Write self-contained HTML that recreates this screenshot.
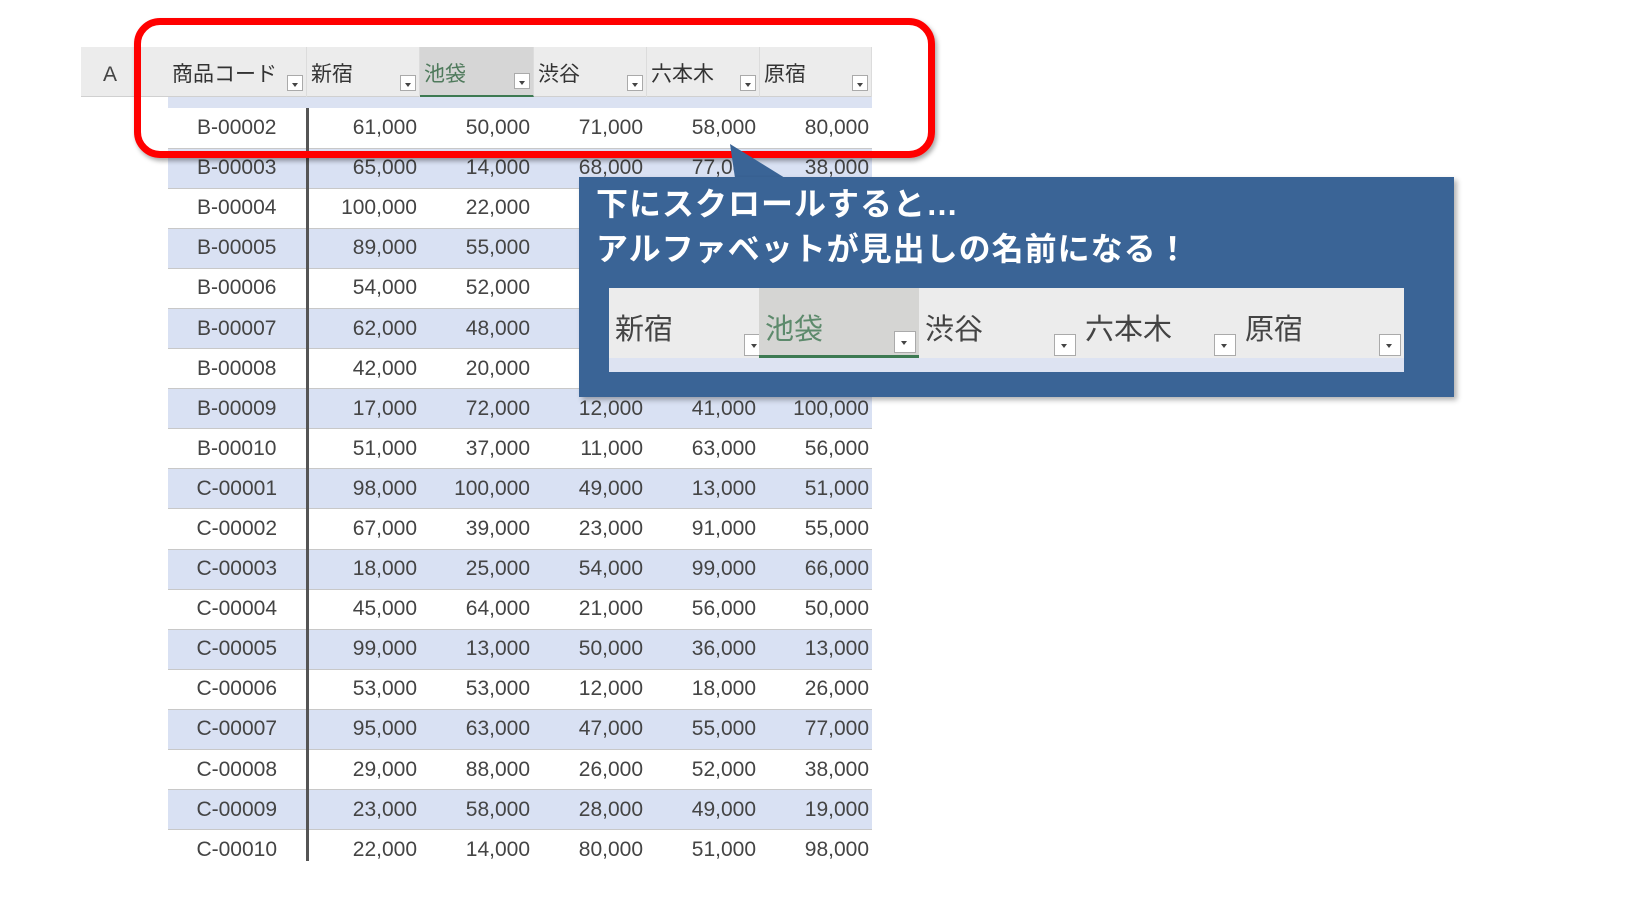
<!DOCTYPE html>
<html><head><meta charset="utf-8"><style>
*{margin:0;padding:0;box-sizing:border-box}
body{width:1638px;height:897px;background:#fff;position:relative;overflow:hidden;font-family:"Liberation Sans","Noto Sans CJK JP",sans-serif}
.hdr{position:absolute;left:81px;top:47px;width:791px;height:50px;background:#ececec;border-bottom:1px solid #d0d0d0}
.hc{position:absolute;top:0;height:50px;font-size:21px;color:#333;line-height:56px;padding-left:4px;border-right:1px solid #dcdcdc}
.dd{position:absolute;right:3px;bottom:6px;width:16px;height:16px;border:1px solid #aaa;background:#fff}
.dd:after{content:"";position:absolute;left:4px;top:7px;border-left:3px solid transparent;border-right:3px solid transparent;border-top:4px solid #444}
.strip{position:absolute;left:168px;top:97px;width:704px;height:11px;background:#dbe2f2}
table{position:absolute;left:168px;top:108px;border-collapse:collapse;font-size:21px;color:#444;table-layout:fixed}
td{height:40.1px;border-bottom:1px solid #c8c8c8;text-align:right;padding-right:3px;width:113px}
td.c{width:139px;text-align:center;padding:0;border-right:3px solid #555}
tr.b td{background:#d9e1f3}
.clip{position:absolute;left:0;top:0;width:1638px;height:861px;overflow:hidden}
.red{position:absolute;left:134px;top:18px;width:801px;height:140px;border:7px solid #f00;border-radius:26px;box-shadow:2px 3px 5px rgba(0,0,0,.35)}
.call{position:absolute;left:579px;top:177px;width:875px;height:220px;background:#3a6496;box-shadow:3px 3px 5px rgba(0,0,0,.3)}
.tri{position:absolute;left:0;top:0}
.ct{position:absolute;left:17px;top:5px;color:#fff;font-weight:bold;font-size:32px;line-height:45px;letter-spacing:1px}
.inner{position:absolute;left:30px;top:111px;width:795px;height:84px;background:#ececec}
.ic{position:absolute;top:0;height:70px;width:160px;font-size:29px;color:#444;line-height:84px;padding-left:6px}
.ic .dd{width:22px;height:22px;bottom:2px}
.ic .dd:after{left:6px;top:9px}
</style></head><body>
<div class="hdr">
<div style="position:absolute;left:22px;top:0;font-size:21px;line-height:56px;color:#444">A</div>
<div class="hc" style="left:87px;width:139px">商品コード<div class="dd"></div></div>
<div class="hc" style="left:226px;width:113px">新宿<div class="dd"></div></div>
<div class="hc" style="left:339px;width:114px;background:#d6d6d6;color:#4f7a5c;border-bottom:2px solid #3d7a52">池袋<div class="dd"></div></div>
<div class="hc" style="left:453px;width:113px">渋谷<div class="dd"></div></div>
<div class="hc" style="left:566px;width:113px">六本木<div class="dd"></div></div>
<div class="hc" style="left:679px;width:112px">原宿<div class="dd"></div></div>
</div>
<div class="strip"></div>
<div class="clip">
<table>
<tr><td class="c">B-00002</td><td>61,000</td><td>50,000</td><td>71,000</td><td>58,000</td><td>80,000</td></tr>
<tr class="b"><td class="c">B-00003</td><td>65,000</td><td>14,000</td><td>68,000</td><td>77,000</td><td>38,000</td></tr>
<tr><td class="c">B-00004</td><td>100,000</td><td>22,000</td><td>60,000</td><td>40,000</td><td>30,000</td></tr>
<tr class="b"><td class="c">B-00005</td><td>89,000</td><td>55,000</td><td>40,000</td><td>40,000</td><td>30,000</td></tr>
<tr><td class="c">B-00006</td><td>54,000</td><td>52,000</td><td>90,000</td><td>40,000</td><td>30,000</td></tr>
<tr class="b"><td class="c">B-00007</td><td>62,000</td><td>48,000</td><td>60,000</td><td>40,000</td><td>30,000</td></tr>
<tr><td class="c">B-00008</td><td>42,000</td><td>20,000</td><td>70,000</td><td>40,000</td><td>30,000</td></tr>
<tr class="b"><td class="c">B-00009</td><td>17,000</td><td>72,000</td><td>12,000</td><td>41,000</td><td>100,000</td></tr>
<tr><td class="c">B-00010</td><td>51,000</td><td>37,000</td><td>11,000</td><td>63,000</td><td>56,000</td></tr>
<tr class="b"><td class="c">C-00001</td><td>98,000</td><td>100,000</td><td>49,000</td><td>13,000</td><td>51,000</td></tr>
<tr><td class="c">C-00002</td><td>67,000</td><td>39,000</td><td>23,000</td><td>91,000</td><td>55,000</td></tr>
<tr class="b"><td class="c">C-00003</td><td>18,000</td><td>25,000</td><td>54,000</td><td>99,000</td><td>66,000</td></tr>
<tr><td class="c">C-00004</td><td>45,000</td><td>64,000</td><td>21,000</td><td>56,000</td><td>50,000</td></tr>
<tr class="b"><td class="c">C-00005</td><td>99,000</td><td>13,000</td><td>50,000</td><td>36,000</td><td>13,000</td></tr>
<tr><td class="c">C-00006</td><td>53,000</td><td>53,000</td><td>12,000</td><td>18,000</td><td>26,000</td></tr>
<tr class="b"><td class="c">C-00007</td><td>95,000</td><td>63,000</td><td>47,000</td><td>55,000</td><td>77,000</td></tr>
<tr><td class="c">C-00008</td><td>29,000</td><td>88,000</td><td>26,000</td><td>52,000</td><td>38,000</td></tr>
<tr class="b"><td class="c">C-00009</td><td>23,000</td><td>58,000</td><td>28,000</td><td>49,000</td><td>19,000</td></tr>
<tr><td class="c">C-00010</td><td>22,000</td><td>14,000</td><td>80,000</td><td>51,000</td><td>98,000</td></tr>
</table>
</div>
<div class="red"></div>
<svg class="tri" width="1638" height="897"><polygon points="730,144 735,178 785,178" fill="#3a6496"/></svg>
<div class="call">
<div class="ct">下にスクロールすると…<br>アルファベットが見出しの名前になる！</div>
<div class="inner">
<div class="ic" style="left:0">新宿<div class="dd"></div></div>
<div class="ic" style="left:150px;background:#d5d5d3;color:#5d8a6c;border-bottom:3px solid #3d7a52">池袋<div class="dd"></div></div>
<div class="ic" style="left:310px">渋谷<div class="dd"></div></div>
<div class="ic" style="left:470px">六本木<div class="dd"></div></div>
<div class="ic" style="left:630px;width:165px">原宿<div class="dd"></div></div>
<div style="position:absolute;left:0;top:70px;width:795px;height:14px;background:#dde3f2"></div>
</div>
</div>
</body></html>
